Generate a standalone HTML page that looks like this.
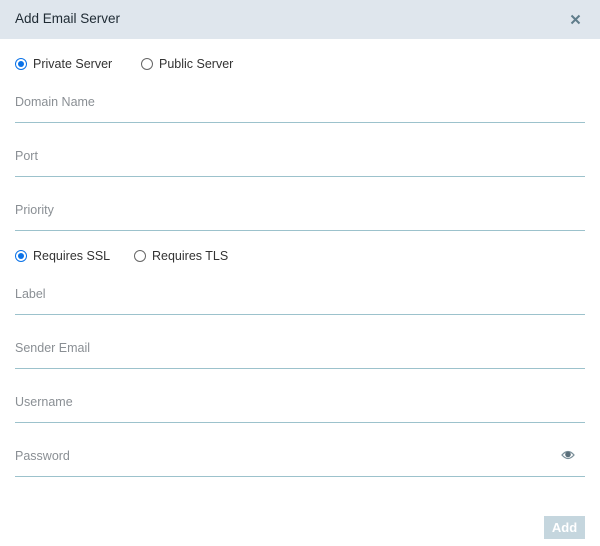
<!DOCTYPE html><html><head><style>
body{margin:0;width:600px;height:546px;background:#fff;font-family:"Liberation Sans",sans-serif;position:relative;overflow:hidden}
.hd{position:absolute;left:0;top:0;width:600px;height:39px;background:#dfe6ed}
.hd span{position:absolute;left:15px;top:11px;font-size:13.5px;color:#1e2a33}
.x{position:absolute;left:570px;top:14px}
.r{position:absolute;font-size:12.5px;color:#333}
.c{position:absolute;width:12px;height:12px;border:1px solid #666;border-radius:50%;box-sizing:border-box}
.c.on{border:1px solid #0a72e8}
.c.on::after{content:"";position:absolute;left:2px;top:2px;width:6px;height:6px;border-radius:50%;background:#0a72e8}
.f{position:absolute;left:15px;width:570px;border-bottom:1px solid #9cc2cc;height:30px}
.f span{position:absolute;left:0;top:3px;font-size:12.5px;color:#8a8f94}
.btn{position:absolute;left:544px;top:516px;width:41px;height:23px;background:#c5d6de;color:#fff;font-size:13px;font-weight:bold;text-align:center;line-height:23px}
</style></head><body>
<div class="hd"><span>Add Email Server</span>
<svg class="x" width="11" height="11" viewBox="0 0 11 11"><path d="M1.5 1.5L9.5 9.5M9.5 1.5L1.5 9.5" stroke="#607d8b" stroke-width="2"/></svg></div>
<div class="c on" style="left:15px;top:58px"></div><div class="r" style="left:33px;top:57px">Private Server</div>
<div class="c" style="left:141px;top:58px"></div><div class="r" style="left:159px;top:57px">Public Server</div>
<div class="f" style="top:92px"><span>Domain Name</span></div>
<div class="f" style="top:146px"><span>Port</span></div>
<div class="f" style="top:200px"><span>Priority</span></div>
<div class="c on" style="left:15px;top:250px"></div><div class="r" style="left:33px;top:249px">Requires SSL</div>
<div class="c" style="left:134px;top:250px"></div><div class="r" style="left:152px;top:249px">Requires TLS</div>
<div class="f" style="top:284px"><span>Label</span></div>
<div class="f" style="top:338px"><span>Sender Email</span></div>
<div class="f" style="top:392px"><span>Username</span></div>
<div class="f" style="top:446px"><span>Password</span>
<svg style="position:absolute;left:546px;top:4px" width="14" height="10" viewBox="0 0 14 10"><path d="M1 5Q7 -2 13 5Q7 12 1 5Z" fill="none" stroke="#7a8f99" stroke-width="1.3"/><circle cx="7" cy="4.5" r="2.8" fill="#5a6f7a"/></svg></div>
<div class="btn">Add</div>
</body></html>
